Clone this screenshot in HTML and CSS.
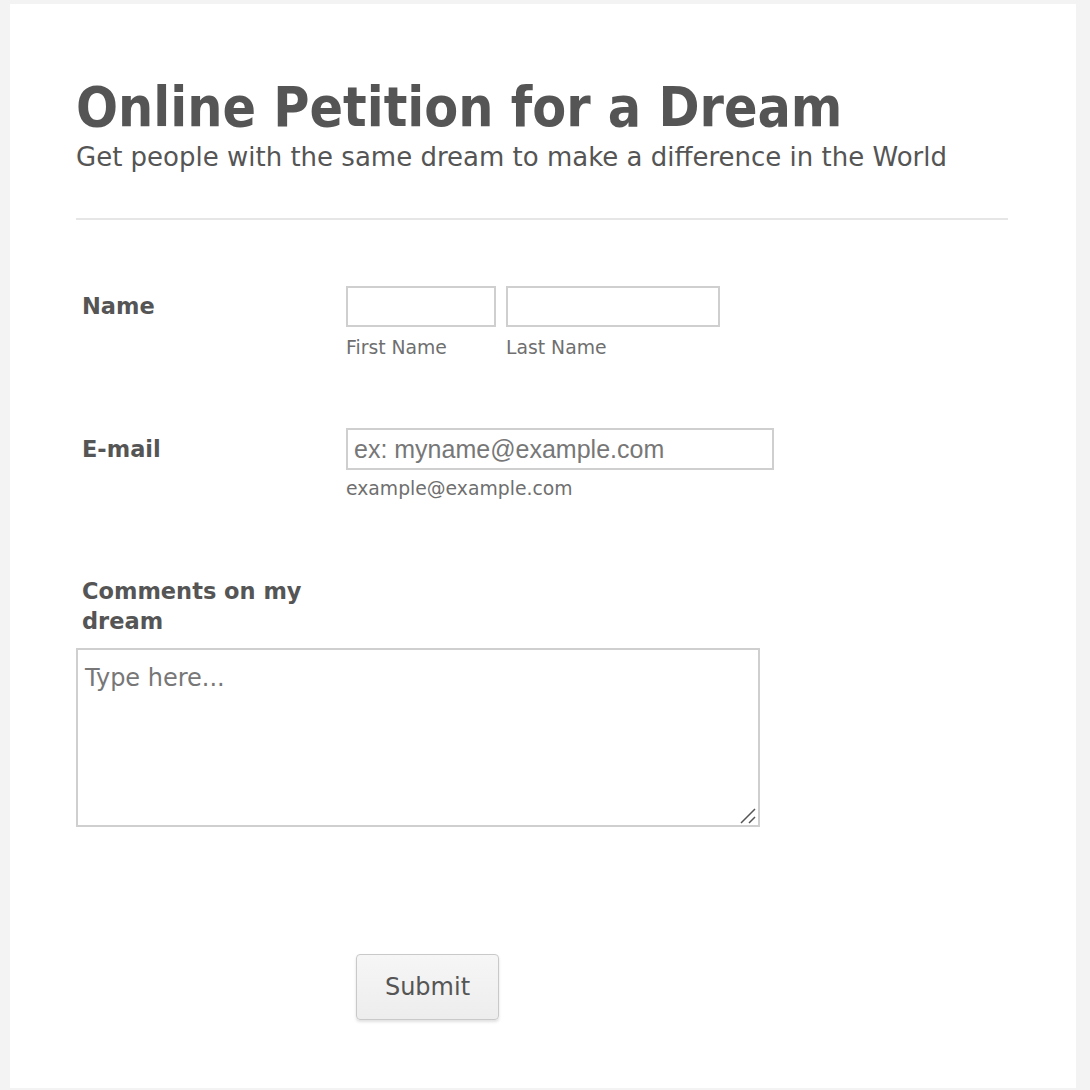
FILE: index.html
```html
<!DOCTYPE html>
<html lang="en">
<head>
  <meta charset="UTF-8">
  <meta name="viewport" content="width=device-width, initial-scale=1.0">
  <title>Online Petition for a Dream</title>
  <link rel="stylesheet" href="styles.css">
</head>
<body>

  <form class="form-all" onsubmit="return false">
    <div class="form-header-group">
      <h1 class="form-header">Online Petition for a Dream</h1>
      <div class="form-subheader">Get people with the same dream to make a difference in the World</div>
    </div>

    <ul class="form-section">
      <!-- name -->
      <li class="form-line">
        <label class="form-label">Name</label>
        <div class="form-input">
          <span class="sub-field">
            <input type="text" class="form-textbox first-name">
            <label class="form-sub-label">First Name</label>
          </span>
          <span class="sub-field">
            <input type="text" class="form-textbox last-name">
            <label class="form-sub-label">Last Name</label>
          </span>
        </div>
      </li>

      <!-- email -->
      <li class="form-line line-email">
        <label class="form-label">E-mail</label>
        <div class="form-input">
          <input type="email" class="form-textbox email" placeholder="ex: myname@example.com">
          <label class="form-sub-label">example@example.com</label>
        </div>
      </li>

      <!-- comments, label on top -->
      <li class="form-line line-top">
        <label class="form-label">Comments on my dream</label>
        <div class="textarea-wrap">
          <textarea class="form-textarea" placeholder="Type here..."></textarea>
          <svg class="grip" width="18" height="16" viewBox="0 0 18 16">
            <path d="M2 15 L16 1 M10 15 L16 9" stroke="#555" stroke-width="1.5" fill="none"/>
          </svg>
        </div>
      </li>

      <li class="form-line line-submit">
        <button type="submit" class="form-submit-button">Submit</button>
      </li>
    </ul>
  </form>

</body>
</html>
```

FILE: styles.css
```css
body {
  margin: 0;
  padding: 4px 14px 2px 10px;
  background-color: #f3f3f3;
  font-family: "DejaVu Sans", Verdana, sans-serif;
  color: #555;
}

.form-all {
  background-color: #fff;
  padding: 76px 68px 67px 66px;
  min-height: 1084px;
  box-sizing: border-box;
}

.form-header-group {
  padding-bottom: 46px;
  border-bottom: 2px solid #e6e6e6;
}

.form-header {
  margin: 0;
  font-family: "DejaVu Sans Condensed", "DejaVu Sans", sans-serif;
  font-stretch: condensed;
  font-size: 55px;
  line-height: 55px;
  font-weight: bold;
  color: #555;
}

.form-subheader {
  margin-top: 7px;
  font-size: 26px;
  line-height: 30px;
  color: #555;
}

.form-section {
  list-style: none;
  margin: 0;
  padding: 0;
}

.form-line {
  display: flex;
  align-items: flex-start;
  margin-top: 66px;
}

.line-email {
  margin-top: 69px;
}

.form-label {
  width: 258px;
  flex-shrink: 0;
  padding: 5px 6px 0;
  font-size: 22.5px;
  line-height: 30px;
  font-weight: bold;
  color: #555;
}

.line-email .form-label {
  padding-top: 6px;
}

.form-input {
  display: flex;
  flex-direction: column;
  align-items: flex-start;
}

.form-input:has(.sub-field) {
  flex-direction: row;
  gap: 10px;
}

.sub-field {
  display: flex;
  flex-direction: column;
}

.form-textbox {
  box-sizing: border-box;
  height: 41px;
  margin: 0;
  padding: 0 6px;
  border: 2px solid #cfcfcf;
  border-radius: 0;
  background: #fff;
  font-family: "Liberation Sans", Arial, sans-serif;
  font-size: 25px;
  color: #555;
  outline: none;
}

.form-textbox::placeholder {
  color: #777;
}

.first-name {
  width: 150px;
}

.last-name {
  width: 214px;
}

.email {
  width: 428px;
  height: 42px;
}

.form-sub-label {
  display: block;
  margin-top: 10px;
  font-size: 18.8px;
  line-height: 22px;
  color: #6f6f6f;
}

.line-email .form-sub-label {
  margin-top: 8px;
}

/* comments: label sits above the field */
.line-top {
  flex-direction: column;
  margin-top: 76px;
}

.line-top .form-label {
  padding-top: 0;
}

.textarea-wrap {
  position: relative;
  margin-top: 12px;
}

.form-textarea {
  display: block;
  box-sizing: border-box;
  width: 684px;
  height: 179px;
  margin: 0;
  padding: 13px 7px 10px;
  border: 2px solid #cfcfcf;
  font-family: "DejaVu Sans", Verdana, sans-serif;
  font-size: 24px;
  line-height: 30px;
  color: #555;
  resize: both;
  outline: none;
}

.form-textarea::-webkit-resizer {
  background: transparent;
}

.form-textarea::placeholder {
  color: #777;
}

/* resize grip drawn over the corner */
.grip {
  position: absolute;
  right: 3px;
  bottom: 3px;
  pointer-events: none;
}

.line-submit {
  margin-top: 127px;
  padding-left: 280px;
}

.form-submit-button {
  width: 143px;
  height: 66px;
  padding: 0;
  border: 1px solid #c9c9c9;
  border-radius: 4px;
  background: linear-gradient(#f6f6f6, #ededed);
  box-shadow: 0 2px 3px rgba(0, 0, 0, 0.12);
  font-family: "DejaVu Sans", Verdana, sans-serif;
  font-size: 24px;
  color: #555;
  cursor: pointer;
}

.form-submit-button:hover {
  background: #e6e6e6;
}
```
